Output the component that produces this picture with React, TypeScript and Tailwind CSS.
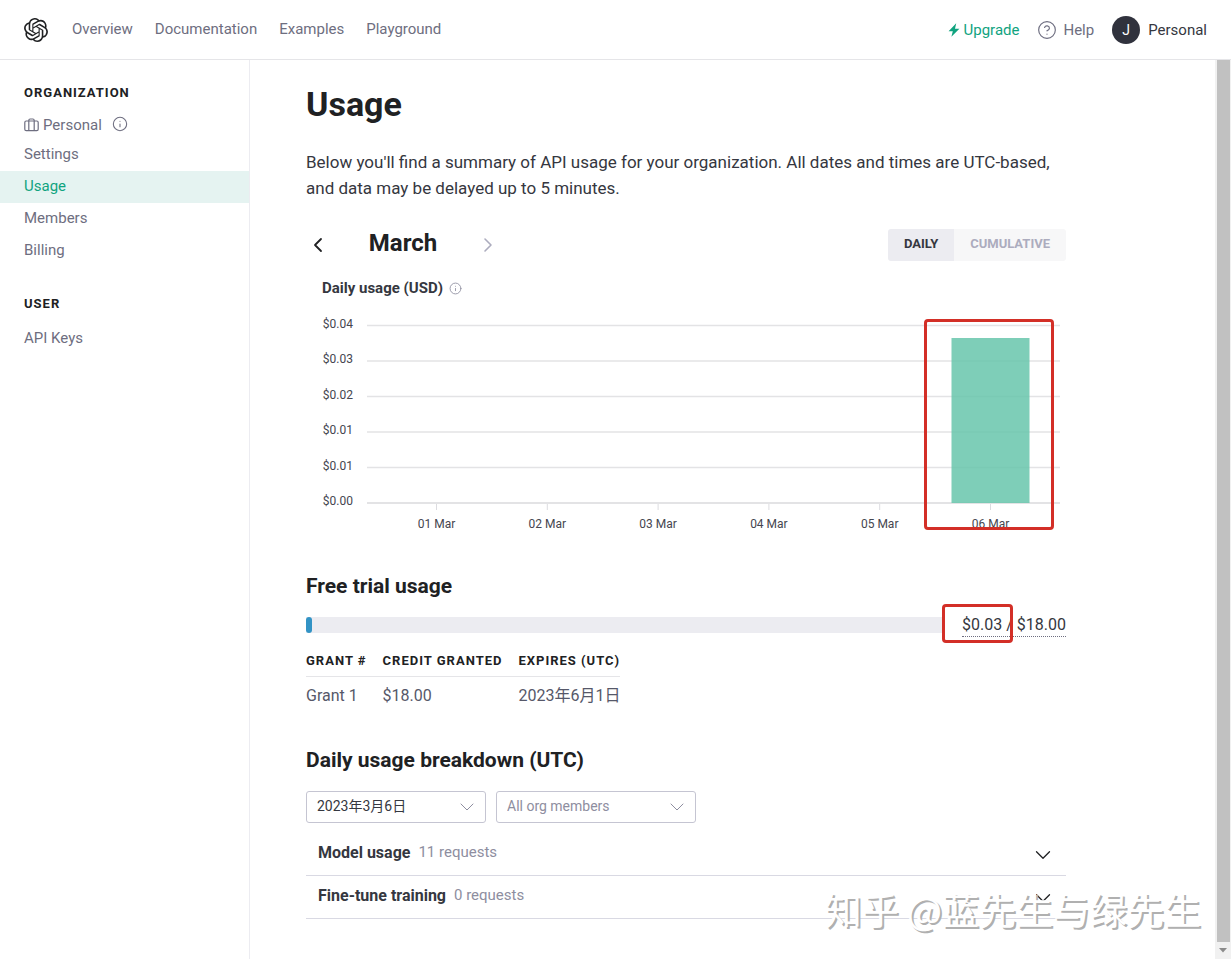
import { ChevronDown, ChevronLeft, ChevronRight, CircleHelp, Info } from 'lucide-react';
import { SiOpenai } from 'react-icons/si';

const navLinks = ['Overview', 'Documentation', 'Examples', 'Playground'];
const orgLinks = ['Settings', 'Usage', 'Members', 'Billing'];

const days = [
  { label: '01 Mar', cost: 0 },
  { label: '02 Mar', cost: 0 },
  { label: '03 Mar', cost: 0 },
  { label: '04 Mar', cost: 0 },
  { label: '05 Mar', cost: 0 },
  { label: '06 Mar', cost: 165 },
];
const ticks = ['$0.00', '$0.01', '$0.01', '$0.02', '$0.03', '$0.04'];

function BoltIcon() {
  return (
    <svg width="12" height="14" viewBox="0 0 12 14" fill="currentColor" aria-hidden="true">
      <path d="M8.2 0.2 0.6 8.2h4.2L3.4 13.8 11.4 5.8H7z" />
    </svg>
  );
}

function BriefcaseIcon() {
  return (
    <svg width="15" height="15" viewBox="0 0 15 15" fill="none" stroke="currentColor" strokeWidth="1.2" aria-hidden="true">
      <rect x="0.8" y="3" width="13.4" height="9.6" rx="1.4" />
      <path d="M4.8 12.6V2.4c0-.9.5-1.4 1.3-1.4h2.8c.8 0 1.3.5 1.3 1.4v10.2" />
    </svg>
  );
}

function Header() {
  return (
    <header className="h-[60px] shrink-0 border-b border-[#e5e5e8] px-6 flex items-center justify-between">
      <nav className="flex items-center gap-6 text-[15px] leading-5 text-[#6e6e80]">
        <a href="#" aria-label="Home" className="text-[#202123]">
          <SiOpenai size={24} />
        </a>
        <div className="flex gap-[22px] pb-0.5">
          {navLinks.map((link) => (
            <a key={link} href="#">{link}</a>
          ))}
        </div>
      </nav>
      <div className="flex items-center gap-[18px] text-[15px] leading-5">
        <a href="#" className="flex items-center gap-1 text-[#10a37f]">
          <BoltIcon />
          Upgrade
        </a>
        <button className="flex items-center gap-1.5 text-[#6e6e80]">
          <CircleHelp size={20} strokeWidth={1.4} />
          Help
        </button>
        <button className="flex items-center gap-2 text-[#353740]">
          <span className="w-7 h-7 rounded-full bg-[#30323d] text-white text-[14px] flex items-center justify-center">J</span>
          Personal
        </button>
      </div>
    </header>
  );
}

function Sidebar() {
  return (
    <aside className="w-[250px] shrink-0 border-r border-[#ececf1] pt-[25px] text-[15px] text-[#6e6e80]">
      <h2 className="px-6 text-[13px] leading-4 font-bold tracking-[1px] text-[#202123]">ORGANIZATION</h2>
      <div className="mt-2.5 h-7 px-6 flex items-center">
        <BriefcaseIcon />
        <span className="ml-1">Personal</span>
        <Info size={16} strokeWidth={1.6} className="ml-2.5 mb-0.5" />
      </div>
      {orgLinks.map((link) => (
        <a
          key={link}
          href="#"
          className={
            link === 'Usage'
              ? 'h-8 px-6 pb-0.5 flex items-center bg-[#e5f3f1] text-[#10a37f]'
              : 'h-8 px-6 pb-0.5 flex items-center'
          }
        >
          {link}
        </a>
      ))}
      <h2 className="mt-[29px] px-6 text-[13px] leading-4 font-bold tracking-[1px] text-[#202123]">USER</h2>
      <a href="#" className="mt-2.5 h-8 px-6 flex items-center">API Keys</a>
    </aside>
  );
}

function UsageChart() {
  return (
    <div className="relative">
      <svg viewBox="0 0 760 240" className="w-full block" role="img" aria-label="Daily usage (USD)">
        {ticks.map((tick, i) => {
          const y = 205 - i * 35.5;
          return (
            <g key={i}>
              <line x1="61" x2="754" y1={y} y2={y} stroke="#e3e3e5" strokeWidth={i === 0 ? 2 : 1.4} />
              <text x="47" y={y + 2} textAnchor="end" fontSize="12" fill="#45464f">{tick}</text>
            </g>
          );
        })}
        {days.map((day, i) => {
          const x = 130.5 + i * 110.8;
          return (
            <g key={day.label}>
              <line x1={x} x2={x} y1="206" y2="212" stroke="#dcdce0" />
              <rect x={x - 39} y={205 - day.cost} width="78" height={day.cost} fill="#67c5ab" fillOpacity="0.85" />
              <text x={x} y="230" textAnchor="middle" fontSize="12" fill="#45464f">{day.label}</text>
            </g>
          );
        })}
      </svg>
      {/* marker around the last day */}
      <div className="absolute right-3 top-[21px] w-[130px] h-[211px] rounded-[4px] border-3 border-[#d32f27]" />
    </div>
  );
}

function FreeTrial() {
  return (
    <section className="mt-[34px]">
      <h2 className="text-[21px] leading-7 font-bold text-[#202123]">Free trial usage</h2>
      <div className="mt-[13px] relative flex items-center gap-[18px]">
        <div className="flex-1 h-4 bg-[#ececf1]">
          <div className="w-1.5 h-4 rounded-[3px] bg-[#3293c5]" />
        </div>
        <span className="text-[16px] leading-[23px] text-[#353740] border-b border-dotted border-[#6e6e80]">$0.03 / $18.00</span>
        <div className="absolute right-[53px] -top-[9px] w-[71px] h-[39px] rounded-[4px] border-3 border-[#d32f27]" />
      </div>
      <table className="mt-4 text-left">
        <thead>
          <tr className="border-b border-[#e5e5e8] text-[13px] leading-4 tracking-[1px] text-[#202123]">
            <th className="pr-4 pb-[7px] font-bold">GRANT #</th>
            <th className="pr-4 pb-[7px] font-bold">CREDIT GRANTED</th>
            <th className="pb-[7px] font-bold">EXPIRES (UTC)</th>
          </tr>
        </thead>
        <tbody>
          <tr className="text-[16px] leading-6 text-[#565869]">
            <td className="pt-[7px]">Grant 1</td>
            <td className="pt-[7px]">$18.00</td>
            <td className="pt-[7px]">2023年6月1日</td>
          </tr>
        </tbody>
      </table>
    </section>
  );
}

function Breakdown() {
  const rows = [
    { name: 'Model usage', requests: '11 requests' },
    { name: 'Fine-tune training', requests: '0 requests' },
  ];
  return (
    <section className="mt-[38px]">
      <h2 className="text-[21px] leading-7 font-bold text-[#202123]">Daily usage breakdown (UTC)</h2>
      <div className="mt-[17px] flex gap-2.5">
        <div className="relative w-[180px]">
          <select aria-label="Date" className="w-full h-8 pl-2.5 pb-0.5 rounded-[3px] border border-[#c5c5d2] bg-white appearance-none text-[14px] text-[#353740]">
            <option>2023年3月6日</option>
          </select>
          <ChevronDown size={24} strokeWidth={1} className="absolute right-[7px] top-1 text-[#8e8ea0] pointer-events-none" />
        </div>
        <div className="relative w-[200px]">
          <select aria-label="Members" className="w-full h-8 pl-2.5 pb-0.5 rounded-[3px] border border-[#c5c5d2] bg-white appearance-none text-[14px] text-[#8e8ea0]">
            <option>All org members</option>
          </select>
          <ChevronDown size={24} strokeWidth={1} className="absolute right-[7px] top-1 text-[#8e8ea0] pointer-events-none" />
        </div>
      </div>
      <div className="mt-2.5">
        {rows.map((row) => (
          <button key={row.name} className="w-full h-[43px] pl-3 pr-2.5 pb-[3px] flex items-center gap-2 border-b border-[#d9d9e3] text-left">
            <span className="text-[16px] font-bold text-[#353740]">{row.name}</span>
            <span className="flex-1 text-[15px] text-[#8e8ea0]">{row.requests}</span>
            <ChevronDown size={26} strokeWidth={1.2} className="mt-1 text-[#202123]" />
          </button>
        ))}
      </div>
    </section>
  );
}

export default function App() {
  return (
    <div className="relative min-h-screen bg-white flex flex-col font-[Roboto,'Noto_Sans_CJK_SC',sans-serif]">
      <Header />
      <div className="flex-1 flex">
        <Sidebar />
        <main className="flex-1 pt-6 pl-14 pr-6">
          <div className="max-w-[760px]">
            <h1 className="text-[34px] leading-10 font-bold text-[#202123]">Usage</h1>
            <p className="mt-[25px] text-[17px] leading-[26px] text-[#353740]">
              Below you'll find a summary of API usage for your organization. All dates and times are UTC-based, and data may be delayed up to 5 minutes.
            </p>
            <div className="mt-7 flex items-center justify-between">
              <div className="flex items-center">
                <button aria-label="Previous month" className="text-[#202123]">
                  <ChevronLeft size={24} strokeWidth={1.8} />
                </button>
                <h2 className="w-[146px] pb-1 text-center text-[24px] leading-7 font-bold text-[#202123]">March</h2>
                <button aria-label="Next month" className="text-[#acacbe]" disabled>
                  <ChevronRight size={24} strokeWidth={1.6} />
                </button>
              </div>
              <div className="h-8 flex rounded-[3px] overflow-hidden text-[13px] font-bold">
                <button className="px-4 pb-0.5 bg-[#ececf1] text-[#353740]">DAILY</button>
                <button className="px-4 pb-0.5 bg-[#f7f7f8] text-[#acacbe]">CUMULATIVE</button>
              </div>
            </div>
            <h3 className="mt-[17px] pl-4 flex items-center gap-1.5 text-[15px] leading-5 font-bold text-[#353740]">
              Daily usage (USD)
              <Info size={13} strokeWidth={1.6} className="text-[#8e8ea0]" />
            </h3>
            <UsageChart />
            <FreeTrial />
            <Breakdown />
          </div>
        </main>
        {/* scrollbar */}
        <div className="w-4 shrink-0 bg-[#f1f1f1] flex flex-col items-center">
          <div className="w-[13px] flex-1 bg-[#c1c1c1]" />
          <div className="h-[17px] flex items-center">
            <svg width="8" height="5" viewBox="0 0 8 5" fill="#8b8b8b" aria-hidden="true">
              <path d="M0 0h8L4 4.5z" />
            </svg>
          </div>
        </div>
      </div>
      <div className="absolute right-[30px] bottom-[22px] font-['Noto_Sans_CJK_SC',sans-serif] text-[37px] leading-[56px] text-white [text-shadow:2px_2px_0_#b0b0b0] whitespace-nowrap pointer-events-none">
        知乎 @蓝先生与绿先生
      </div>
    </div>
  );
}
